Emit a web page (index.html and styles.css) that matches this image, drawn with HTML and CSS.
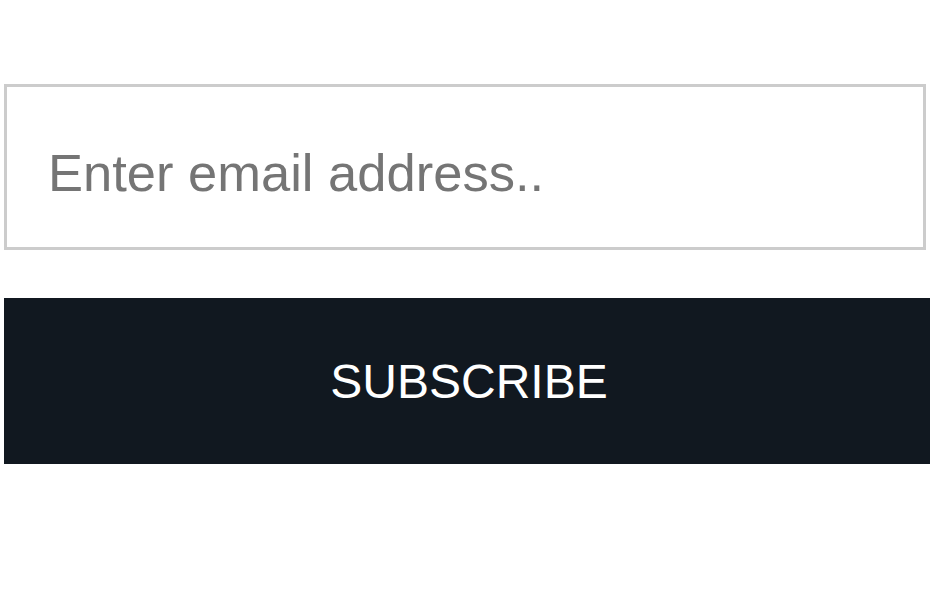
FILE: index.html
```html
<!DOCTYPE html>
<html lang="en">
<head>
<meta charset="utf-8">
<title>Subscribe</title>
<link rel="stylesheet" href="styles.css">
</head>
<body>
<form class="subscribe">
  <input class="email" type="email" placeholder="Enter email address..">
  <button class="btn" type="button">SUBSCRIBE</button>
</form>
</body>
</html>
```
FILE: styles.css
```css
html, body {
  margin: 0;
  padding: 0;
  background: #fff;
  overflow: hidden;
}
.subscribe {
  display: flex;
  flex-direction: column;
  align-items: flex-start;
  gap: 48px;
  padding: 84px 0 0 4px;
  font-family: "Liberation Sans", Arial, sans-serif;
}
.email {
  box-sizing: border-box;
  width: 922px;
  height: 166px;
  border: 3px solid #cccccc;
  padding: 10px 0 0 41px;
  font-family: inherit;
  font-size: 52.5px;
  color: #333;
  background: #fff;
  outline: none;
}
.email::placeholder {
  color: #757575;
  opacity: 1;
}
.btn {
  box-sizing: border-box;
  width: 930px;
  height: 166px;
  flex-shrink: 0;
  border: 0;
  background: #111820;
  color: #fff;
  font-family: inherit;
  font-size: 48px;
  padding: 0;
}
```
